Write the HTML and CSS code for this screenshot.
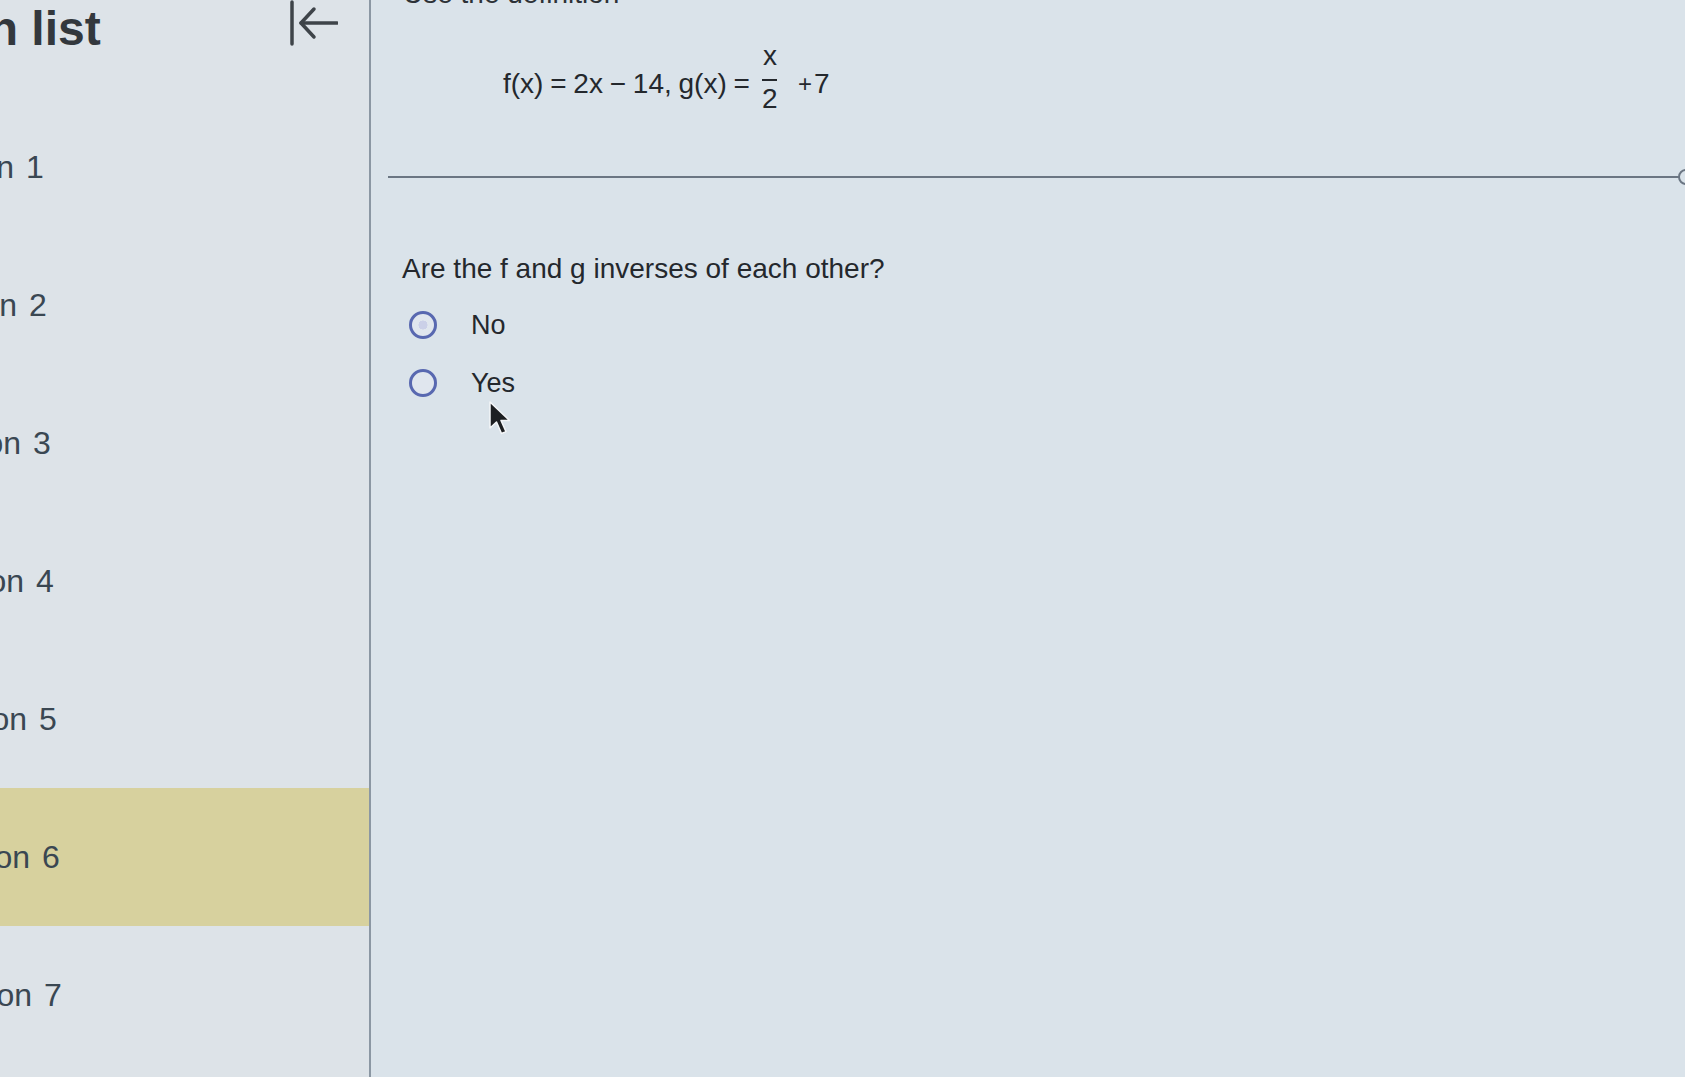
FILE: index.html
```html
<!DOCTYPE html>
<html lang="en">
<head>
<meta charset="utf-8">
<title>Question</title>
<link rel="stylesheet" href="styles.css">
</head>
<body>
<div class="app">
  <aside class="sidebar">
    <div class="side-head">
      <span class="side-title">Question list</span>
      <svg class="collapse-icon" width="50" height="46" viewBox="0 0 50 46" aria-hidden="true">
        <path d="M4 2 V44" />
        <path d="M13 23 H49" />
        <path d="M26 9 L13 23 L26 37" />
      </svg>
    </div>
    <ul class="q-list">
      <li class="q-item"><span class="q-label">Question 1</span></li>
      <li class="q-item"><span class="q-label">Question 2</span></li>
      <li class="q-item"><span class="q-label">Question 3</span></li>
      <li class="q-item"><span class="q-label">Question 4</span></li>
      <li class="q-item"><span class="q-label">Question 5</span></li>
      <li class="q-item q-current"><span class="q-label">Question 6</span></li>
      <li class="q-item"><span class="q-label">Question 7</span></li>
    </ul>
  </aside>
  <main class="main">
    <p class="instructions">Use the definition</p>
    <div class="formula">
      <span class="expr">f(x) = 2x − 14, g(x) =</span>
      <span class="frac">
        <span class="num">x</span>
        <span class="bar"></span>
        <span class="den">2</span>
      </span>
      <span class="expr tail"><span class="plus">+</span>7</span>
    </div>
    <div class="divider"><span class="divider-knob"></span></div>
    <p class="question">Are the f and g inverses of each other?</p>
    <div class="options">
      <label class="option"><span class="radio radio-focus"></span><span class="opt-text">No</span></label>
      <label class="option"><span class="radio"></span><span class="opt-text">Yes</span></label>
    </div>
    <svg class="cursor" width="24" height="36" viewBox="0 0 24 36" aria-hidden="true">
      <path d="M2 2 L2 28 L8.5 22 L13.5 33.5 L18 31.6 L13 20.5 L21.5 20.5 Z" />
    </svg>
  </main>
</div>
</body>
</html>
```
FILE: styles.css
```css
* { box-sizing: border-box; }

html, body {
  margin: 0;
  padding: 0;
  width: 1685px;
  height: 1077px;
  overflow: hidden;
  background: #dae2e9;
  font-family: "Liberation Sans", Arial, sans-serif;
}

.app {
  display: flex;
  height: 1077px;
}

/* Sidebar */
.sidebar {
  width: 371px;
  flex: 0 0 371px;
  background: #dde3e8;
  border-right: 2px solid #8b97a3;
  overflow: hidden;
}

.side-head {
  display: flex;
  align-items: flex-start;
  height: 52px;
}

.side-title {
  margin-top: 4px;
  margin-left: -190px;
  font-size: 48px;
  font-weight: bold;
  line-height: 50px;
  color: #33383d;
  white-space: nowrap;
}

.collapse-icon {
  margin-left: auto;
  margin-right: 31px;
  flex: 0 0 auto;
}

.collapse-icon path {
  fill: none;
  stroke: #3e4449;
  stroke-width: 3.5;
  stroke-linecap: round;
  stroke-linejoin: round;
}

.q-list {
  list-style: none;
  margin: 46px 0 0;
  padding: 0;
}

.q-item {
  display: flex;
  align-items: center;
  height: 138px;
}

.q-current {
  background: #d7d19e;
}

.q-label {
  margin-left: -114px;
  font-size: 32px;
  color: #3a4752;
  white-space: nowrap;
  word-spacing: 3px;
}

.q-item:nth-child(2) .q-label { margin-left: -111px; }
.q-item:nth-child(3) .q-label { margin-left: -107px; }
.q-item:nth-child(4) .q-label { margin-left: -104px; }
.q-item:nth-child(5) .q-label { margin-left: -101px; }
.q-item:nth-child(6) .q-label { margin-left: -98px; }
.q-item:nth-child(7) .q-label { margin-left: -96px; }

/* Main area */
.main {
  position: relative;
  flex: 1 1 auto;
  background: #dae3ea;
}

.instructions {
  margin: -23px 0 0 32px;
  font-size: 28px;
  line-height: 34px;
  color: #2d3237;
}

.formula {
  display: flex;
  align-items: flex-start;
  margin: 29px 0 0 132px;
  font-size: 28px;
  color: #24282d;
}

.expr {
  margin-top: 27px;
  line-height: 34px;
  white-space: nowrap;
  word-spacing: -1px;
}

.frac {
  display: flex;
  flex-direction: column;
  align-items: center;
  width: 18px;
  margin: 2px 0 0 11px;
}

.num, .den {
  line-height: 28px;
}

.bar {
  width: 15px;
  height: 2px;
  margin-top: 9px;
  background: #24282d;
}

.den {
  margin-top: 4px;
}

.tail {
  margin-left: 19px;
}

.plus {
  display: inline-block;
  margin-right: 2px;
  font-size: 24px;
  vertical-align: 1px;
}

.divider {
  position: relative;
  margin: 63px 0 0 17px;
  height: 2px;
  background: #6b7683;
}

.divider-knob {
  position: absolute;
  right: -9px;
  top: -7px;
  width: 16px;
  height: 16px;
  border: 2px solid #6b7683;
  border-radius: 50%;
  background: #dae3ea;
}

.question {
  margin: 74px 0 0 31px;
  font-size: 28px;
  line-height: 34px;
  color: #24282d;
}

.options {
  display: flex;
  flex-direction: column;
  gap: 18px;
  margin: 19px 0 0 38px;
}

.option {
  display: flex;
  align-items: center;
  height: 40px;
}

.radio {
  width: 28px;
  height: 28px;
  border: 3px solid #5868b0;
  border-radius: 50%;
  background: #e0e6ee;
  flex: 0 0 auto;
}

.radio-focus {
  background: radial-gradient(circle, #cbd0e8 0 28%, #e0e6ee 30%);
}

.opt-text {
  margin-left: 34px;
  font-size: 27px;
  line-height: 40px;
  color: #24282d;
}

.cursor {
  position: absolute;
  left: 117px;
  top: 400px;
}

.cursor path {
  fill: #1d1f22;
  stroke: #f4f6f8;
  stroke-width: 1.5;
  stroke-linejoin: round;
}
```
